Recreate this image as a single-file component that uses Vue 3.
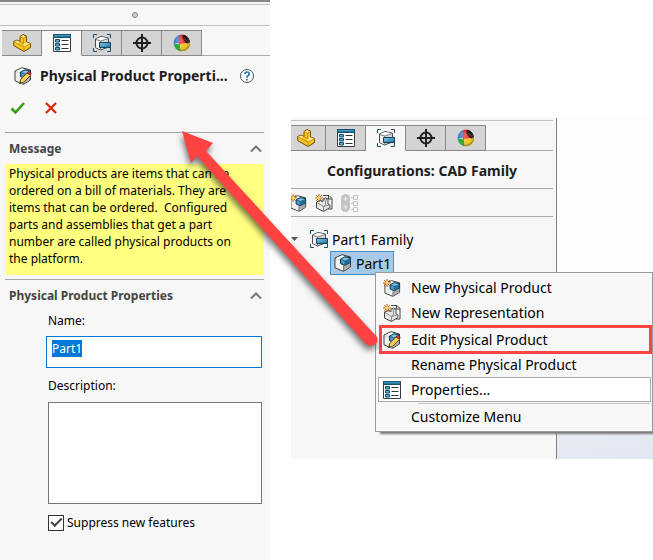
<script setup>
import {onMounted, ref} from "vue";

const tabs = ref([
  {icon: "part", label: "FeatureManager"},
  {icon: "list", label: "PropertyManager"},
  {icon: "config", label: "ConfigurationManager"},
  {icon: "target", label: "DimXpertManager"},
  {icon: "sphere", label: "DisplayManager"},
])

const menuList = ref([
  {icon: "new-product", label: "New Physical Product"},
  {icon: "new-rep", label: "New Representation"},
  {icon: "edit", label: "Edit Physical Product", type: "marked"},
  {icon: "", label: "Rename Physical Product"},
  {icon: "list", label: "Properties...", type: "hovered"},
  {icon: "", label: "Customize Menu", type: "last"},
])

const message = [
  "Physical products are items that can be",
  "ordered on a bill of materials. They are",
  "items that can be ordered.  Configured",
  "parts and assemblies that get a part",
  "number are called physical products on",
  "the platform.",
].join("\n")

const name = ref("Part1")
const description = ref("")
const suppress = ref(true)
const nameRef = ref()

onMounted(() => {
  nameRef.value.focus()
  nameRef.value.select()
})
</script>

<template>
  <div class="page">
    <!-- icon sprite -->
    <svg class="sprite" width="0" height="0" aria-hidden="true">
      <defs>
        <linearGradient id="blue" x1="0" y1="0" x2="1" y2="1">
          <stop offset="0" stop-color="#8ccbe6"/>
          <stop offset="1" stop-color="#1b6d98"/>
        </linearGradient>
        <radialGradient id="shine" cx=".4" cy=".35" r=".65">
          <stop offset="0" stop-color="#fff" stop-opacity=".35"/>
          <stop offset=".6" stop-color="#fff" stop-opacity="0"/>
          <stop offset="1" stop-color="#000" stop-opacity=".4"/>
        </radialGradient>
        <clipPath id="ball"><circle cx="9" cy="9" r="8.5"/></clipPath>
      </defs>
      <symbol id="part" viewBox="0 0 18 18">
        <path d="M7 2.500 10 .5l3.500 1.500v6l4 1.500v4l-6.500 4L.7 11.500v-4L4 6l3 1.500z" fill="#fcc41f" stroke="#6a4c04" stroke-linejoin="round"/>
        <path d="M7.300 2.700 10 1.200l3 1.300-2.500 1.400zM10.800 9.600l2.700-1.300 3.500 1.400-6 3.300zM1.200 7.700 4 6.500l2.800 1.400L4.500 9.500z" fill="#ffe88c"/>
        <path d="m7 2.700 3.500 1.500v5.300l-3.500-2M10.500 4.200l3-1.700M1 7.700l10 5.500v4M11 13.200l6.300-3.500" fill="none" stroke="#b78512" stroke-width=".8"/>
      </symbol>
      <symbol id="list" viewBox="0 0 18 18">
        <path d="M.5.5h17v17H.5z" fill="#fff" stroke="#333d44"/>
        <path d="M0 0h18v4H0z" fill="#17506b"/>
        <path d="M1 1h16v1.500H1z" fill="#3f9dc5"/>
        <path d="M2.500 5.500h4V8h-4zM2.500 9.500h4V12h-4zM2.500 13.500h4V16h-4z" fill="#57add2" stroke="#154e6b"/>
        <path d="M8.500 6.500h7M8.500 10.500h7M8.500 14.500h7" stroke="#333"/>
      </symbol>
      <symbol id="config" viewBox="0 0 18 18">
        <path d="M.5 4V.5H4M14 .5h3.500V4M.5 14v3.500H4M14 17.500h3.500V14" fill="none" stroke="#17506b"/>
        <path d="m2.500 5 5.500-2.500 7.500 1.500v9L7.500 16l-5-2.500z" fill="#d9d9d9" stroke="#4a4a4a" stroke-linejoin="round"/>
        <path d="m3.200 5 5-2 6.500 1.300L8 6.500z" fill="#fff"/>
        <path d="m3 5.800 4 1.600v7.800l-4-2z" fill="#f4f4f4"/>
        <path d="M3 5.500 7.500 7l8-2.500M7.500 7v8.500" fill="none" stroke="#808080"/>
        <path d="M6.500 8.500h11v5h-11z" fill="url(#blue)" stroke="#103f57"/>
      </symbol>
      <symbol id="target" viewBox="0 0 18 18">
        <circle cx="9" cy="9" r="5.500" fill="none" stroke="#1f1f1f" stroke-width="2"/>
        <path d="M9 0v18M0 9h18" stroke="#1f1f1f" stroke-width="2"/>
      </symbol>
      <symbol id="sphere" viewBox="0 0 18 18">
        <g clip-path="url(#ball)">
          <path d="M0 0h18v18H0z" fill="#f5f5f5"/>
          <path d="M0 0h7v9l-7 1z" fill="#2d7fd0"/>
          <path d="M7 0h4l4 9.300-9 .7Q4.500 5 7 0z" fill="#e02020"/>
          <path d="M0 10h7l1 8H0z" fill="#2fa834"/>
          <path d="m7 10 11-1v9H8z" fill="#f6c51c"/>
          <ellipse cx="13" cy="5" rx="2.700" ry="5" transform="rotate(-38 13 5)" fill="#1b1111"/>
          <path d="m12 4.500 2.500 3" stroke="#8a3a3a"/>
          <circle cx="9" cy="9" r="8.500" fill="url(#shine)"/>
        </g>
      </symbol>
      <symbol id="product" viewBox="0 0 18 18">
        <path d="M1 4 8 .7l8.500 2.300v10L9.500 17.300 1 13.800z" fill="#d2d2d2" stroke="#3c3c3c" stroke-linejoin="round"/>
        <path d="M2 4.300 8 1.500l4 1L6.500 5.500z" fill="#fff"/>
        <path d="m1.800 5 5 2v3.500l2.200 1v5L1.800 13.300z" fill="#f0f0f0"/>
        <path d="m10 12.500 6-3v3.300l-6 3.700z" fill="#aaa"/>
        <path d="M9.500 12v5" stroke="#777"/>
        <path d="M6.500 5 11 2.700l5.500 1.300V8.500L10.800 11.500l-4.300-2z" fill="#236f98" stroke="#0f3f59" stroke-linejoin="round"/>
        <path d="M7.500 5.100 11 3.400l4.500 1-4.500 2z" fill="#82c2df"/>
        <path d="m7.200 6 3.100 1.200v3.300l-3.100-1.500z" fill="#4a9cc3"/>
      </symbol>
      <symbol id="star" viewBox="0 0 18 18">
        <path d="M4 0v8M0 4h8M1.200 1.200l5.600 5.600M6.800 1.200 1.200 6.800" stroke="#b5560c"/>
        <circle cx="4" cy="4" r="1.700" fill="#ffd95c"/>
      </symbol>
      <symbol id="new-product" viewBox="0 0 18 18">
        <use href="#product" x="1" y="1" width="17" height="17"/>
        <use href="#star" width="18" height="18"/>
      </symbol>
      <symbol id="new-rep" viewBox="0 0 18 18">
        <path d="M8 1.500h6l3 3V15h-4" fill="#fafafa" stroke="#444"/>
        <path d="M13.500 1.500V5H17" fill="none" stroke="#444"/>
        <path d="M1.500 8 5 6.500l3 1V5l2.500-1L13 5v5l2 1v2.500l-6.500 4-7-3.500z" fill="#e6e6e6" stroke="#444" stroke-linejoin="round"/>
        <path d="m8.300 5.200 2.200 1L13 5M10.500 6.500v4.500l-2.500 1.500M2 8.500l6.500 4 6-1.500M8.500 12.500v4.500" fill="none" stroke="#8b8b8b"/>
        <use href="#star" width="18" height="18"/>
      </symbol>
      <symbol id="edit" viewBox="0 0 18 18">
        <use href="#product" width="18" height="18"/>
        <path d="m5.500 16.500 1.200-4L13.500 5.500l3 2.500-7 7.500z" fill="#fff" stroke="#fff"/>
        <path d="m5.500 16.500 1.300-4.200 6.700-6.600 3 2.700-7 7z" fill="#ffd159" stroke="#594018"/>
        <path d="m13 6 1.500-1.500q1.500-.5 2.500 1.500l-.5 2z" fill="#d63b35" stroke="#802222"/>
        <path d="m5.500 16.500.7-2 1.500 1.400z" fill="#222"/>
      </symbol>
      <symbol id="tree" viewBox="0 0 18 18">
        <rect x="0" y="0" width="9" height="18" rx="4.500" fill="#c4c4c4"/>
        <path d="M4.500 3v4M2.500 5h4M4.500 11v4M2.500 13h4" stroke="#eee"/>
        <path d="M12.500 1.500h4v4h-4zM12.500 7.500h4v4h-4zM12.500 13.500h4v4h-4zM10 3.500h2M10 9.500h2M10 15.500h2" fill="none" stroke="#c2c2c2"/>
      </symbol>
    </svg>

    <form class="property-panel" @submit.prevent>
      <div class="grip"><span></span></div>
      <nav class="tabs">
        <button
            v-for="item in tabs"
            :key="item.icon"
            type="button"
            class="tab"
            :class="{'tab-active': item.icon === 'list'}"
            :aria-label="item.label"
        >
          <svg class="icon"><use :href="'#' + item.icon"/></svg>
        </button>
        <span class="tab-rest"></span>
      </nav>

      <header class="title">
        <svg class="icon"><use href="#edit"/></svg>
        <h1>Physical Product Properti...</h1>
        <button type="button" class="plain" aria-label="Help">
          <svg width="16" height="16" viewBox="0 0 16 16">
            <circle cx="8" cy="8" r="6.500" fill="#fff" stroke="#45535c"/>
            <path d="M5.800 6.200Q6 4 8 4t2.200 2Q10.200 7.200 8 8.500v1.300M8 11v1.500" fill="none" stroke="#2178a8" stroke-width="1.700"/>
          </svg>
        </button>
      </header>
      <div class="actions">
        <button type="submit" class="plain" aria-label="OK">
          <svg width="16" height="14" viewBox="0 0 16 14"><path d="m1.500 7.500 4 4L14 2" fill="none" stroke="#2f9e0c" stroke-width="2.500"/></svg>
        </button>
        <button type="button" class="plain" aria-label="Cancel">
          <svg width="12" height="14" viewBox="0 0 12 14"><path d="m1 2 10 10M11 2 1 12" fill="none" stroke="#e02400" stroke-width="2.200"/></svg>
        </button>
      </div>

      <section class="section">
        <h2>Message
          <svg width="12" height="8" viewBox="0 0 12 8"><path d="m1 6.500 5-5 5 5" fill="none" stroke="#777" stroke-width="2"/></svg>
        </h2>
        <p class="message">{{message}}</p>
      </section>

      <section class="section">
        <h2>Physical Product Properties
          <svg width="12" height="8" viewBox="0 0 12 8"><path d="m1 6.500 5-5 5 5" fill="none" stroke="#777" stroke-width="2"/></svg>
        </h2>
        <div class="fields">
          <label for="name">Name:</label>
          <input id="name" ref="nameRef" v-model="name" type="text" class="name-input">
          <label for="description">Description:</label>
          <textarea id="description" v-model="description"></textarea>
          <label class="check">
            <input v-model="suppress" type="checkbox">
            Suppress new features
          </label>
        </div>
      </section>
    </form>

    <div class="workspace">
      <div class="config-panel">
        <nav class="tabs tabs-clipped">
          <button
              v-for="item in tabs"
              :key="item.icon"
              type="button"
              class="tab"
              :class="{'tab-active': item.icon === 'config'}"
              :aria-label="item.label"
          >
            <svg class="icon"><use :href="'#' + item.icon"/></svg>
          </button>
          <span class="tab-rest"></span>
        </nav>
        <h2 class="config-title">Configurations: CAD Family</h2>
        <div class="toolbar">
          <button type="button" class="plain" aria-label="New Physical Product"><svg class="icon"><use href="#new-product"/></svg></button>
          <button type="button" class="plain" aria-label="New Representation"><svg class="icon"><use href="#new-rep"/></svg></button>
          <button type="button" class="plain" aria-label="Tree display" disabled><svg class="icon"><use href="#tree"/></svg></button>
        </div>
        <ul class="tree">
          <li class="tree-family">
            <svg width="7" height="4" viewBox="0 0 7 4"><path d="M0 0h7L3.500 4z" fill="#555"/></svg>
            <svg class="icon"><use href="#config"/></svg>
            <span>Part1 Family</span>
          </li>
          <li class="tree-part">
            <svg class="icon"><use href="#product"/></svg>
            <span>Part1</span>
          </li>
        </ul>
      </div>
      <div class="viewport"></div>

      <div class="context-menu">
        <button
            v-for="item in menuList"
            :key="item.label"
            type="button"
            class="menu-item"
            :class="item.type"
        >
          <span class="menu-icon">
            <svg v-if="item.icon" class="icon"><use :href="'#' + item.icon"/></svg>
          </span>
          {{item.label}}
        </button>
      </div>
    </div>

    <!-- callout arrow from the menu entry to the panel -->
    <svg class="arrow" width="210" height="230" viewBox="175 125 210 230">
      <path d="m182 131 31 12-7 8 171 186q2 6-3 8t-8-1L197 156l-6 7z" fill="#ff4343"/>
    </svg>
  </div>
</template>

<style>
body {
  background: #fff;
}
</style>

<style scoped>
.page {
  position: relative;
  display: flex;
  align-items: flex-start;
  gap: 21px;
  min-height: 100vh;
  font-family: "Noto Sans", "Open Sans", sans-serif;
  font-size: 12px;
  color: #000;
}
.page *, .page *::before {
  box-sizing: border-box;
}
.sprite {
  position: absolute;
}
.icon {
  display: block;
  flex: none;
  width: 18px;
  height: 18px;
}
button, input, textarea {
  font: inherit;
  color: inherit;
}
.plain {
  border: 0;
  padding: 0;
  background: none;
}
.plain svg {
  display: block;
}
h1, h2, p, ul {
  margin: 0;
  padding: 0;
}
.property-panel {
  flex: 0 0 270px;
  min-width: 0;
  min-height: 100vh;
  background: #f7f7f7;
  border-top: 2px solid #85858a;
}
.grip {
  display: flex;
  align-items: center;
  justify-content: center;
  height: 22px;
  margin-top: 2px;
  border-top: 1px solid #c0c0c0;
  border-bottom: 1px solid #c0c0c0;
}
.grip span {
  width: 6px;
  height: 6px;
  border: 1px solid #888;
  border-radius: 50%;
  background: #ccc;
}
.tabs {
  display: flex;
  height: 26px;
  margin-top: 4px;
  padding-left: 2px;
}
.tab {
  display: flex;
  align-items: center;
  justify-content: center;
  flex: 0 0 40px;
  padding: 0;
  border: 1px solid #888;
  border-left: 0;
  background: #d4d4d4;
}
.tab-active {
  border-bottom-color: transparent;
  background: #f7f7f7;
}
.tab-rest {
  flex: 1;
  border-bottom: 1px solid #aaa;
}
.title {
  display: flex;
  align-items: center;
  height: 40px;
  padding: 0 15px 0 14px;
}
.title h1 {
  flex: 1;
  margin-left: 8px;
  font-size: 14px;
  line-height: 20px;
  white-space: nowrap;
  color: #1e1e1e;
}
.actions {
  display: flex;
  align-items: center;
  gap: 19px;
  height: 24px;
  padding-left: 10px;
}
.section {
  margin: 0 6px 4px 5px;
  border-top: 1px solid #a5a5a5;
}
.actions + .section {
  margin-top: 12px;
}
.section h2 {
  display: flex;
  align-items: center;
  justify-content: space-between;
  height: 31px;
  padding: 0 2px 0 4px;
  font-size: 12px;
  color: #444;
}
.message {
  min-height: 111px;
  padding: 1px 4px 8px;
  background: #ffff80;
  line-height: 17px;
  white-space: pre;
}
.fields {
  display: flex;
  flex-direction: column;
  padding: 1px 2px 0 41px;
}
.fields label {
  line-height: 18px;
  padding-left: 2px;
}
.name-input {
  height: 32px;
  margin: 6px 0 9px;
  padding: 3px 5px 10px;
  border: 1px solid #0078d7;
  background: #fff;
  line-height: 17px;
  outline: 0;
}
.name-input::selection {
  background: #0078d7;
  color: #fff;
}
.fields textarea {
  height: 102px;
  margin: 7px 0 10px 2px;
  border: 1px solid #767676;
  background: #fff;
  outline: 0;
  resize: none;
}
.fields .check {
  display: flex;
  align-items: center;
  gap: 3px;
}
.check input {
  appearance: none;
  display: grid;
  place-items: center;
  width: 16px;
  height: 16px;
  margin: 0;
  border: 1px solid #333;
  background: #fff;
}
.check input:checked::before {
  content: '';
  width: 11px;
  height: 6px;
  margin-top: -4px;
  border: solid #444;
  border-width: 0 0 2px 2px;
  transform: rotate(-45deg);
}
.workspace {
  position: relative;
  display: flex;
  flex: 1;
  min-width: 0;
  min-height: 341px;
  margin-top: 118px;
}
.config-panel {
  flex: 0 0 266px;
  overflow: hidden;
  padding-right: 3px;
  border-right: 1px solid #808080;
  background: #f7f7f7;
}
.config-panel::before {
  content: '';
  display: block;
  margin-top: 2px;
  border-top: 1px solid #c4c4c4;
}
.tabs-clipped {
  margin-left: -5px;
  padding-left: 0;
}
.config-title {
  height: 37px;
  font-size: 14px;
  line-height: 39px;
  text-align: center;
  color: #1e1e1e;
}
.toolbar {
  display: flex;
  align-items: center;
  gap: 8px;
  height: 29px;
  margin-left: -2px;
  border: solid #a9a9a9;
  border-width: 1px 0;
}
.tree {
  padding-top: 10px;
  font-size: 14px;
  list-style: none;
}
.tree li {
  display: flex;
  align-items: center;
  gap: 4px;
  height: 24px;
}
.tree-family svg:first-child {
  margin-right: 8px;
}
.tree .tree-part {
  width: 64px;
  margin-left: 39px;
  padding-left: 3px;
  border: 1px solid #4b8fc4;
  background: #a8c9e6;
}
.viewport {
  flex: 1;
  background: linear-gradient(170deg, #fdfdfd 50%, #e2e6f1);
}
.context-menu {
  position: absolute;
  top: 154px;
  left: 84px;
  right: 0;
  display: flex;
  flex-direction: column;
  padding: 2px 1px 1px 2px;
  border: 1px solid #999;
  background: #f7f7f7;
  box-shadow: 4px 3px 2px -1px #777;
}
.menu-item {
  display: flex;
  align-items: center;
  height: 25px;
  padding: 0 4px;
  border: 1px solid transparent;
  background: none;
  font-size: 14px;
  text-align: left;
  white-space: nowrap;
}
.menu-icon {
  flex: 0 0 28px;
}
.marked {
  height: 29px;
  margin: 0 -1px -2px 1px;
  padding: 0 1px;
  border: 3px solid #ff4343;
}
.hovered {
  border-color: #aaa;
  background: #fff;
}
.last {
  position: relative;
  height: 28px;
}
.last::before {
  content: '';
  position: absolute;
  top: 0;
  left: 39px;
  right: 0;
  border-top: 1px solid #c4c4c4;
}
.arrow {
  position: absolute;
  top: 125px;
  left: 175px;
  overflow: visible;
  pointer-events: none;
  filter: drop-shadow(-1px 4px 3px rgba(0, 0, 0, .55));
}
</style>
